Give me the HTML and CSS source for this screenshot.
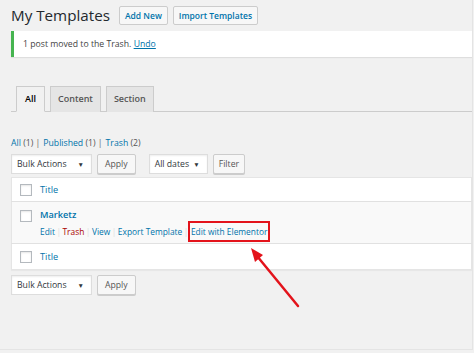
FILE: index.html
```html
<!DOCTYPE html>
<html lang="en">
<head>
  <meta charset="UTF-8" />
  <title>My Templates</title>
  <link rel="stylesheet" href="styles.css">
</head>
<body>
  <div class="wrap">
    <div class="page-head">
      <h1>My Templates</h1>
      <a class="title-btn">Add New</a>
      <a class="title-btn">Import Templates</a>
    </div>

    <div class="notice">
      <p>1 post moved to the Trash. <a class="undo">Undo</a></p>
    </div>

    <div class="tabs">
      <a class="tab active">All</a>
      <a class="tab">Content</a>
      <a class="tab">Section</a>
    </div>

    <ul class="subsubsub">
      <li><a>All <span class="count">(1)</span></a> |</li>
      <li><a>Published <span class="count">(1)</span></a> |</li>
      <li><a>Trash <span class="count">(2)</span></a></li>
    </ul>

    <div class="tablenav">
      <div class="select wide">Bulk Actions <span class="caret">&#9660;</span></div>
      <button class="btn">Apply</button>
      <div class="select dates">All dates <span class="caret">&#9660;</span></div>
      <button class="btn filter">Filter</button>
    </div>

    <table class="list">
      <thead>
        <tr>
          <td class="cb"><span class="box"></span></td>
          <th><a>Title</a></th>
        </tr>
      </thead>
      <tbody>
        <tr class="alt">
          <td class="cb"><span class="box"></span></td>
          <td>
            <strong class="row-title">Marketz</strong>
            <div class="row-actions"><a>Edit</a><span class="sep">|</span><a class="trash">Trash</a><span class="sep">|</span><a>View</a><span class="sep">|</span><a>Export Template</a><span class="sep">|</span><a class="highlight">Edit with Elementor</a></div>
          </td>
        </tr>
      </tbody>
      <tfoot>
        <tr>
          <td class="cb"><span class="box"></span></td>
          <th><a>Title</a></th>
        </tr>
      </tfoot>
    </table>

    <div class="tablenav bottom">
      <div class="select wide">Bulk Actions <span class="caret">&#9660;</span></div>
      <button class="btn">Apply</button>
    </div>
  </div>

  <svg class="arrow" width="474" height="353" viewBox="0 0 474 353">
    <line x1="298" y1="306" x2="257" y2="256" stroke="#e3131b" stroke-width="2.5" stroke-linecap="round"/>
    <polygon points="251,248 263,255 255,262" fill="#e3131b"/>
  </svg>
</body>
</html>
```

FILE: styles.css
```css
body {
  margin: 0;
  background: #f1f1f1;
  font-family: "Open Sans", sans-serif;
  font-size: 8.7px;
  color: #444;
  width: 472px;
  height: 349px;
  border-right: 1px solid #e4e4e4;
  border-bottom: 1px solid #e4e4e4;
}
a {
  color: #0073aa;
  text-decoration: none;
}
.wrap {
  padding: 6px 0 0 11px;
}
.page-head {
  display: flex;
  align-items: center;
  gap: 5px;
  height: 19px;
}
.page-head h1 {
  font-size: 15.2px;
  font-weight: 400;
  color: #23282d;
  margin: 0 4px 0 0;
  line-height: 19px;
}
.title-btn {
  border: 1px solid #ccc;
  background: #f7f7f7;
  border-radius: 2px;
  padding: 0 5px;
  line-height: 17px;
  font-weight: 600;
  font-size: 8.5px;
}
.notice {
  margin-top: 6px;
  background: #fff;
  border-left: 3px solid #46b450;
  box-shadow: 0 1px 1px rgba(0, 0, 0, 0.08);
  height: 26px;
  display: flex;
  align-items: center;
  padding-left: 9px;
}
.notice p {
  margin: 0;
  color: #444;
}
.undo {
  text-decoration: underline;
}
.tabs {
  margin-top: 29px;
  display: flex;
  gap: 5px;
  padding-left: 5px;
  border-bottom: 1px solid #ccc;
}
.tab {
  border: 1px solid #ccc;
  border-bottom: none;
  background: #e5e5e5;
  color: #555;
  font-weight: 600;
  font-size: 9px;
  padding: 0 7px;
  line-height: 24px;
  margin-bottom: -1px;
}
.tab.active {
  padding: 0 8px;
  background: #f1f1f1;
  color: #000;
  border-bottom: 1px solid #f1f1f1;
}
.subsubsub {
  list-style: none;
  margin: 24px 0 0;
  padding: 0;
  display: flex;
  gap: 3px;
  color: #666;
  line-height: 14px;
}
.count {
  color: #555;
}
.tablenav {
  display: flex;
  gap: 5px;
  margin-top: 4px;
  height: 20px;
  align-items: center;
}
.select {
  background: #fff;
  border: 1px solid #ddd;
  box-shadow: inset 0 1px 2px rgba(0, 0, 0, 0.07);
  height: 20px;
  padding: 0 7px 0 5px;
  display: flex;
  align-items: center;
  justify-content: space-between;
  color: #32373c;
  box-sizing: border-box;
}
.select.wide {
  width: 81px;
}
.select.dates {
  width: 59px;
  margin-left: 8px;
}
.caret {
  font-size: 6.5px;
  color: #32373c;
}
.btn {
  font-family: inherit;
  font-size: 8.7px;
  color: #555;
  background: #f7f7f7;
  border: 1px solid #ccc;
  border-radius: 2px;
  box-shadow: 0 1px 0 #ccc;
  height: 20px;
  padding: 0 7px;
}
.btn.filter {
  padding: 0 5px;
}
.list {
  margin-top: 3px;
  width: 461px;
  border-collapse: collapse;
  background: #fff;
  border: 1px solid #e5e5e5;
  box-shadow: 0 1px 1px rgba(0, 0, 0, 0.04);
}
.list th,
.list td {
  text-align: left;
  font-weight: 400;
  padding: 0;
  vertical-align: middle;
}
.list thead tr {
  height: 24px;
  border-bottom: 1px solid #e1e1e1;
}
.list tfoot tr {
  height: 26px;
  border-top: 1px solid #e1e1e1;
}
.list th a {
  font-size: 9.2px;
}
.list .cb {
  width: 20px;
  padding-left: 8px;
}
.box {
  display: block;
  width: 10px;
  height: 10px;
  border: 1px solid #b4b9be;
  background: #fff;
  box-shadow: inset 0 1px 2px rgba(0, 0, 0, 0.1);
}
.alt {
  background: #f9f9f9;
  height: 42px;
}
.alt .cb {
  vertical-align: top;
  padding-top: 8px;
}
.alt td {
  vertical-align: top;
}
.row-title {
  display: block;
  margin-top: 6px;
  color: #0073aa;
  font-weight: 600;
  font-size: 9.2px;
  line-height: 13px;
}
.row-actions {
  margin-top: 4px;
  line-height: 14px;
  white-space: nowrap;
  font-size: 8.4px;
}
.row-actions .sep {
  color: #ddd;
  margin: 0 1.5px;
}
.row-actions .trash {
  color: #a00;
}
.highlight {
  border: 2px solid #e3131b;
  padding: 3px 1px 3px 1px;
  margin-left: -2px;
}
.tablenav.bottom {
  margin-top: 5px;
}
.arrow {
  position: absolute;
  left: 0;
  top: 0;
  pointer-events: none;
}
```
